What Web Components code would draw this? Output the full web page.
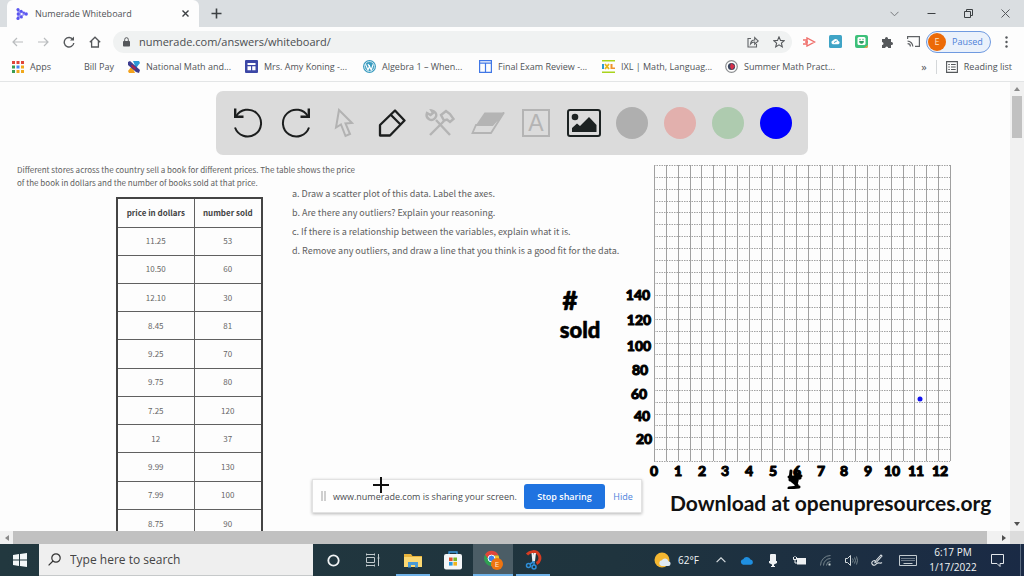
<!DOCTYPE html>
<html lang="en">
<head>
<meta charset="utf-8">
<title>Numerade Whiteboard</title>
<style>
  html, body { margin: 0; height: 100%; }
  body { font-family: "Open Sans", "Noto Sans", sans-serif; font-size: 10px; color: #505357; background: #fdfdfd; overflow: hidden; }
</style>
</head>
<body>
<desktop-screen></desktop-screen>
<script>
const RESET = `
  *, *::before, *::after { box-sizing: border-box; }
  button, input { font: inherit; color: inherit; border: 0; padding: 0; margin: 0; background: none; outline: none; }
  a { color: inherit; text-decoration: none; }
  svg { display: block; flex: none; }
`;
function define(name, css, html, after) {
  const tpl = document.createElement('template');
  tpl.innerHTML = `<style>${RESET}${css}</style>${html}`;
  customElements.define(name, class extends HTMLElement {
    constructor() {
      super();
      this.attachShadow({ mode: 'open' }).append(tpl.content.cloneNode(true));
    }
    connectedCallback() { if (after) after(this, this.shadowRoot); }
  });
}
const label = (host, root) => root.querySelector('button').setAttribute('aria-label', host.getAttribute('label') || '');

/* ---------- shared controls ---------- */
define('icon-button', `
  :host { display: flex; flex: none; width: 26px; }
  button { flex: 1; height: 22px; display: grid; place-items: center; }
`, `<button type="button"><slot></slot></button>`, label);

define('scroll-rail', `
  :host { display: flex; background: #f1f1f1; align-items: stretch; }
  :host([vertical]) { flex-direction: column; }
  .end { flex: none; display: grid; place-items: center; width: 13px; }
  :host([vertical]) .end { width: auto; height: 14px; }
  .track { flex: 1; display: flex; }
  :host([vertical]) .track { flex-direction: column; }
  .thumb { background: #c1c1c1; flex: 0 0 var(--thumb, 50%); }
  :host([vertical]) .thumb { margin: 0 2px; }
  svg { fill: #8a8a8a; }
  :host([vertical]) svg { transform: rotate(90deg); }
  .last svg { fill: #505050; }
`, `
  <div class="end"><svg width="4" height="6"><path d="M4 0v6L0 3z"/></svg></div>
  <div class="track"><div class="thumb"></div></div>
  <div class="end last"><svg width="4" height="6"><path d="M0 0v6l4-3z"/></svg></div>
`);

/* ---------- browser chrome ---------- */
define('tab-strip', `
  :host { display: flex; align-items: stretch; height: 27px; padding-left: 7px; background: #dadee1; }
  .tab { display: flex; align-items: center; width: 192px; padding: 0 7px 0 9px; gap: 7px; background: #fdfdfd; border-radius: 6px 6px 0 0; font-size: 9px; }
  .tab button { flex: 1; text-align: left; line-height: 16px; display: flex; align-items: center; gap: 7px; }
  .tab icon-button { width: 13px; }
  .new { align-self: center; width: 34px; }
  .win { display: flex; margin-left: auto; align-items: center; }
  .win icon-button { width: 37px; }
`, `
  <div class="tab">
    <button type="button" role="tab" aria-selected="true">
      <svg width="12" height="12" viewBox="0 0 12 12" fill="#5a55f0"><path d="M1.400 1 10.600 6 1.400 11z" opacity=".6"/><circle cx="2" cy="1.600" r="1.600"/><circle cx="5.200" cy="3.200" r="1.500"/><circle cx="2.200" cy="6" r="1.600"/><circle cx="10.200" cy="6" r="1.700"/><circle cx="5.400" cy="9" r="1.500"/><circle cx="2" cy="10.400" r="1.600"/><circle cx="7.800" cy="4.600" r="1.200"/><circle cx="5.600" cy="6" r="1" fill="#fff"/></svg>
      <span>Numerade Whiteboard</span>
    </button>
    <icon-button label="Close tab"><svg width="7" height="7" viewBox="0 0 7 7" stroke="#3c4043" stroke-width="1.4"><path d="M.5.5l6 6M6.5.5l-6 6"/></svg></icon-button>
  </div>
  <icon-button class="new" label="New tab"><svg width="11" height="11" viewBox="0 0 11 11" stroke="#3c4043" stroke-width="1.6"><path d="M5.5.5v10M.5 5.5h10"/></svg></icon-button>
  <div class="win">
    <icon-button label="Search tabs"><svg width="9" height="6" viewBox="0 0 9 6" fill="none" stroke="#777a7d"><path d="M.5.8l4 4 4-4"/></svg></icon-button>
    <icon-button label="Minimize"><svg width="9" height="9" viewBox="0 0 9 9" stroke="#3c4043"><path d="M.5 4.5h8"/></svg></icon-button>
    <icon-button label="Restore"><svg width="9" height="9" viewBox="0 0 9 9" fill="none" stroke="#3c4043"><path d="M.5 2.5h6v6h-6zM2.500 2.500v-2h6v6h-2"/></svg></icon-button>
    <icon-button label="Close"><svg width="9" height="9" viewBox="0 0 9 9" stroke="#55585b"><path d="M.5.5l8 8M8.500.5l-8 8"/></svg></icon-button>
  </div>
`);

define('nav-bar', `
  :host { display: flex; align-items: center; height: 29px; padding: 0 5px 0 4px; }
  .omni { flex: 1; display: flex; align-items: center; height: 22px; margin: 0 4px 0 5px; padding: 0 0 0 10px; border-radius: 11px; background: #f0f2f2; }
  input { flex: 1; min-width: 0; margin-left: 9px; font-size: 11px; line-height: 16px; color: #4a4d50; }
  .paused { display: flex; align-items: center; gap: 6px; width: 65px; height: 22px; margin-right: 2px; padding-left: 1px; border: 1px solid #6f9ae0; border-radius: 11px; background: #eaf1fb; color: #4a7fd8; font-size: 9px; }
  .face { display: grid; place-items: center; width: 18px; height: 18px; border-radius: 50%; background: #ec6a08; color: #ffe3c4; }
`, `
  <icon-button label="Back"><svg width="11" height="10" viewBox="0 0 11 10" fill="none" stroke="#b9bcbe" stroke-width="1.200"><path d="M11 5H1M5 1 1 5l4 4"/></svg></icon-button>
  <icon-button label="Forward"><svg width="11" height="10" viewBox="0 0 11 10" fill="none" stroke="#b9bcbe" stroke-width="1.200"><path d="M0 5h10M6 1l4 4-4 4"/></svg></icon-button>
  <icon-button label="Reload"><svg width="12" height="12" viewBox="0 0 12 12" fill="none" stroke="#55585b" stroke-width="1.400"><path d="M10 3.500A4.800 4.800 0 1 0 10.800 7"/><path d="M11 .6v4H7z" fill="#55585b" stroke="none"/></svg></icon-button>
  <icon-button label="Home"><svg width="12" height="12" viewBox="0 0 12 12" fill="none" stroke="#55585b" stroke-width="1.300"><path d="M.8 6.300 6 1.200l5.200 5.100M2.600 5v6h6.800V5"/></svg></icon-button>
  <div class="omni">
    <svg width="7" height="10" viewBox="0 0 7 10"><rect y="4" width="7" height="5.500" rx=".8" fill="#55585b"/><path d="M1.700 4V2.500a1.800 1.800 0 0 1 3.600 0V4" fill="none" stroke="#55585b"/></svg>
    <input type="text" aria-label="Address" value="numerade.com/answers/whiteboard/">
    <icon-button label="Share"><svg width="12" height="12" viewBox="0 0 12 12" fill="none" stroke="#606366" stroke-width="1.100"><path d="M4 2.500H1v8.500h8.500V8M3.500 8c.3-2.700 1.700-4 4.200-4V1.600L11.300 5 7.700 8.200V6C6 6 4.600 6.500 3.500 8z"/></svg></icon-button>
    <icon-button label="Bookmark this tab"><svg width="12" height="12" viewBox="0 0 12 12" fill="none" stroke="#55585b" stroke-width="1.100"><path d="M6 .9l1.500 3.500 3.800.3-2.900 2.500.9 3.700L6 8.900l-3.300 2 .9-3.700L.7 4.700l3.800-.3z"/></svg></icon-button>
  </div>
  <icon-button label="Screencast extension"><svg width="14" height="10" viewBox="0 0 14 10" fill="none" stroke="#f0706c" stroke-width="1.400"><path d="M5 3V1l7.500 4L5 9V7M1 3h4v4H1M3 5h3"/></svg></icon-button>
  <icon-button label="Cloud extension"><svg width="13" height="13" viewBox="0 0 13 13"><rect width="13" height="13" rx="1.500" fill="#3fa4c6"/><path d="M3.800 9.200a1.900 1.900 0 0 1 .2-3.700 2.800 2.800 0 0 1 5.200.4 1.700 1.700 0 0 1 .2 3.300z" fill="#fff"/><path d="M5 7.500 7.800 6" stroke="#3fa4c6"/></svg></icon-button>
  <icon-button label="Bitmoji extension"><svg width="13" height="13" viewBox="0 0 13 13"><rect width="13" height="13" rx="2" fill="#3dc07a"/><rect x="2.500" y="2" width="8" height="8" rx="1.500" fill="#fff"/><path d="M5 3.800v1.400M8 3.800v1.400M4.500 6.500h4c0 2.400-4 2.400-4 0z" stroke="#2c9c60" fill="#2c9c60"/><path d="M9 13h2a2 2 0 0 0 2-2v-1z" fill="#e94"/></svg></icon-button>
  <icon-button label="Extensions"><svg width="12" height="12" viewBox="0 0 12 12" fill="#55585b"><path d="M4 2.500a1.500 1.500 0 0 1 3 0V3h3v3h.5a1.500 1.500 0 0 1 0 3H10v3H7.200a1.500 1.500 0 0 0-3 0H1V9a1.500 1.500 0 0 0 0-3V3h3z"/></svg></icon-button>
  <icon-button label="Cast"><svg width="13" height="11" viewBox="0 0 13 11" fill="none" stroke="#606366" stroke-width="1.200"><path d="M.6 3V.6h11.800v9.800H8M.6 5.200a5.200 5.200 0 0 1 5.200 5.200M.6 7.600a2.800 2.800 0 0 1 2.800 2.800"/></svg></icon-button>
  <button class="paused" type="button"><span class="face">E</span><span>Paused</span></button>
  <icon-button label="Menu"><svg width="3" height="12" viewBox="0 0 3 12" fill="#55585b"><circle cx="1.500" cy="1.500" r="1.200"/><circle cx="1.500" cy="6" r="1.200"/><circle cx="1.500" cy="10.500" r="1.200"/></svg></icon-button>
`);

define('bookmark-link', `
  :host { display: block; min-width: 0; }
  a { display: flex; align-items: center; gap: 6px; white-space: nowrap; line-height: 14px; }
  .icon { flex: none; width: 13px; height: 13px; display: grid; place-items: center; }
`, `<a href="#"><span class="icon"><slot name="icon"></slot></span><slot></slot></a>`);

define('bookmark-bar', `
  :host { display: flex; align-items: center; height: 26px; padding: 0 12px 0 11px; border-bottom: 1px solid #e3e5e6; font-size: 9px; }
  nav { flex: 1; display: grid; grid-template-columns: 54px 62px 118px 118px 116px 123px 123px 1fr; padding-bottom: 4px; }
  .tail { display: flex; align-items: center; padding-bottom: 4px; }
  .more { margin-right: 9px; font-size: 11px; line-height: 14px; }
  .reading { display: flex; align-items: center; gap: 6px; padding-left: 9px; border-left: 1px solid #d4d7d9; line-height: 14px; }
`, `
  <nav aria-label="Bookmarks">
    <bookmark-link><svg slot="icon" width="12" height="12" viewBox="0 0 12 12"><g fill="#e0453a"><path d="M0 0h3v3H0zM4.500 0h3v3h-3zM9 0h3v3H9z"/></g><path d="M0 4.500h3v3H0z" fill="#3a9c52"/><path d="M4.500 4.500h3v3h-3z" fill="#4285f4"/><path d="M9 4.500h3v3H9z" fill="#f0a81c"/><path d="M0 9h3v3H0z" fill="#3a9c52"/><path d="M4.500 9h3v3h-3zM9 9h3v3H9z" fill="#f0a81c"/></svg>Apps</bookmark-link>
    <bookmark-link>Bill Pay</bookmark-link>
    <bookmark-link><svg slot="icon" width="12" height="12" viewBox="0 0 12 12"><path d="M5 0h6l1 2-4 5z" fill="#2b9ad6"/><path d="M7 12H1l-1-2 4-5z" fill="#f3a21c"/><path d="M0 1l2-1 10 9-1 3-3-1L0 4z" fill="#3d3c8f"/><path d="M4 3.500l4 3.500-1 2-4-4z" fill="#a8254e"/></svg>National Math and...</bookmark-link>
    <bookmark-link><svg slot="icon" width="13" height="13" viewBox="0 0 13 13"><rect width="13" height="13" rx="1" fill="#3c47a6"/><path d="M2.500 3h8v2h-8zM2.500 6.200h3.500v4H2.500zM7.200 6.200h3.300v4H7.200z" fill="#fff"/></svg>Mrs. Amy Koning -...</bookmark-link>
    <bookmark-link><svg slot="icon" width="13" height="13" viewBox="0 0 13 13"><circle cx="6.500" cy="6.500" r="6.500" fill="#3a9cc0"/><circle cx="6.500" cy="6.500" r="5" fill="none" stroke="#fff" stroke-width=".7"/><path d="M2.500 4.200 5 10l1.500-4L8.200 10l2-5.800M5 4l2.500 5" fill="none" stroke="#fff" stroke-width="1.100"/></svg>Algebra 1 – When...</bookmark-link>
    <bookmark-link><svg slot="icon" width="13" height="13" viewBox="0 0 13 13" fill="none" stroke="#4077e6" stroke-width="1.200"><path d="M.6.6h11.800v11.800H.6zM.6 3.200h11.800M6.500 3.200v9"/></svg>Final Exam Review -...</bookmark-link>
    <bookmark-link><svg slot="icon" width="13" height="13" viewBox="0 0 13 13"><path d="M0 0h13v1.400H0zM0 11.600h13V13H0z" fill="#a9d31d"/><path d="M0 4h2v5H0z" fill="#2c9ad6"/><path d="M3 4l4 5M7 4 3 9" stroke="#e8b61b" stroke-width="1.800"/><path d="M8.500 4h2v3.500H13V9H8.500z" fill="#f0932b"/></svg>IXL | Math, Languag...</bookmark-link>
    <bookmark-link><svg slot="icon" width="13" height="13" viewBox="0 0 13 13"><circle cx="6.500" cy="6.500" r="5.800" fill="#fff" stroke="#8b8e90" stroke-width="1.200"/><circle cx="6.500" cy="6.500" r="3.600" fill="#39445e"/><path d="M6 3l4 3-3 4-2-3z" fill="#d8304a"/></svg>Summer Math Pract...</bookmark-link>
  </nav>
  <div class="tail">
    <button class="more" type="button" aria-label="More bookmarks">»</button>
    <button class="reading" type="button"><svg width="12" height="12" viewBox="0 0 12 12" fill="none" stroke="#55585b" stroke-width="1.100"><path d="M.6.6h10.800v10.800H.6zM2.300 3.500h1.500M2.300 6h1.500M2.300 8.500h1.500M5 3.500h4.700M5 6h4.700M5 8.500h4.700"/></svg>Reading list</button>
  </div>
`);

/* ---------- whiteboard ---------- */
define('tool-button', `
  :host { display: block; width: 48px; }
  button { width: 100%; height: 48px; display: grid; place-items: center; }
  :host([color]) button::before { content: ""; width: 32px; height: 32px; border-radius: 50%; background: var(--swatch); }
`, `<button type="button"><slot></slot></button>`, (host, root) => {
  label(host, root);
  if (host.hasAttribute('color')) host.style.setProperty('--swatch', host.getAttribute('color'));
});

define('board-tools', `
  :host { display: flex; align-items: center; padding: 8px; border-radius: 7px; background: #dbdbdb; }
`, `
  <tool-button label="Undo"><svg width="30" height="30" viewBox="0 0 30 30" fill="none" stroke="#1c1e1e" stroke-width="2"><path d="M3 8.500A13.400 13.400 0 1 1 2 19.500"/><path d="M2.200 .5v8.300h8.300" stroke-width="2.400"/></svg></tool-button>
  <tool-button label="Redo"><svg width="30" height="30" viewBox="0 0 30 30" fill="none" stroke="#1c1e1e" stroke-width="2"><path d="M27 8.500A13.400 13.400 0 1 0 28 19.500"/><path d="M27.800 .5v8.300h-8.300" stroke-width="2.400"/></svg></tool-button>
  <tool-button label="Select"><svg width="20" height="30" viewBox="0 0 20 30" fill="none" stroke="#b2b2b2" stroke-width="2"><path d="M5 2 2 19.500l5-3L11.500 28l4.500-2-4.500-10.500 6.500-.5z"/></svg></tool-button>
  <tool-button label="Pen"><svg width="28" height="28" viewBox="0 0 28 28" fill="none" stroke="#1c1e1e" stroke-width="2.300" stroke-linejoin="round"><path d="M17 1.500 26.500 11.500 12 26.500H2V16zM13 6l9.500 9.500"/></svg></tool-button>
  <tool-button label="Tools"><svg width="30" height="28" viewBox="0 0 30 28" fill="none" stroke="#b4b4b4" stroke-width="2.400"><path d="M11 11l14 15M19 12 5 26M2 4l3.500 2L8 4 6.500 1.500c3.500.500 5.500 3.500 4.500 6S7 12 4.500 10.500 1 6.500 2 4z"/><path d="M16 6 21 2l4 3 3.500 5-3.500 3-3-2.500-3 1z"/></svg></tool-button>
  <tool-button label="Eraser"><svg width="34" height="24" viewBox="0 0 34 24"><path d="M13.500 1.500H33L21.500 14H5z" fill="#b4b4b4"/><path d="M33 1.500 20 22H1.500L5 14h16.500L33 1.500" fill="none" stroke="#b4b4b4" stroke-width="1.800"/></svg></tool-button>
  <tool-button label="Text"><svg width="28" height="28" viewBox="0 0 28 28" fill="none" stroke="#b4b4b4" stroke-width="2"><path d="M1 1h26v26H1z"/><text x="14" y="22" font-family="Liberation Sans, sans-serif" font-size="23" text-anchor="middle" fill="#b4b4b4" stroke="none">A</text></svg></tool-button>
  <tool-button label="Image"><svg width="34" height="28" viewBox="0 0 34 28"><rect x="1" y="1" width="32" height="26" rx="2" fill="none" stroke="#1c2222" stroke-width="2"/><circle cx="8" cy="8" r="3.300" fill="#1c2222"/><path d="M5 23v-4l5-4.500 3 2.500 9-9 7.500 8v7z" fill="#1c2222"/></svg></tool-button>
  <tool-button label="Gray" color="#afafaf"></tool-button>
  <tool-button label="Red" color="#e2b0ad"></tool-button>
  <tool-button label="Green" color="#aecbaf"></tool-button>
  <tool-button label="Blue" color="#0000ff"></tool-button>
`);

define('price-table', `
  :host { display: block; font-size: 8px; line-height: 10px; color: #666; }
  table { width: 147px; height: 343px; border: 2px solid #444; border-collapse: collapse; text-align: center; }
  th, td { padding: 0; border: 1px solid #606060; vertical-align: middle; }
  th:first-child, td:first-child { width: 77px; }
  th { height: 29px; color: #444; font-weight: 700; }
`, `
  <table>
    <thead><tr><th scope="col">price in dollars</th><th scope="col">number sold</th></tr></thead>
    <tbody></tbody>
  </table>
`, (host, root) => {
  const rows = [['11.25', 53], ['10.50', 60], ['12.10', 30], ['8.45', 81], ['9.25', 70], ['9.75', 80], ['7.25', 120], ['12', 37], ['9.99', 130], ['7.99', 100], ['8.75', 90]];
  root.querySelector('tbody').innerHTML = rows.map(([p, n]) => `<tr><td>${p}</td><td>${n}</td></tr>`).join('');
});

define('problem-sheet', `
  :host { display: grid; grid-template-columns: 275px 1fr; align-content: start; font-family: "Noto Sans CJK SC", "Noto Sans", sans-serif; font-size: 8px; color: #606060; }
  p { grid-column: 1 / -1; margin: 0; max-width: 352px; line-height: 13px; }
  price-table { margin: 8px 0 0 99px; }
  ol { margin: 0; padding: 0; list-style: none; display: grid; align-content: start; gap: 9px; font-size: 9px; line-height: 10px; white-space: nowrap; }
`, `
  <p>Different stores across the country sell a book for different prices. The table shows the price<br>of the book in dollars and the number of books sold at that price.</p>
  <price-table></price-table>
  <ol>
    <li>a. Draw a scatter plot of this data. Label the axes.</li>
    <li>b. Are there any outliers? Explain your reasoning.</li>
    <li>c. If there is a relationship between the variables, explain what it is.</li>
    <li>d. Remove any outliers, and draw a line that you think is a good fit for the data.</li>
  </ol>
`);

define('scatter-grid', `
  :host { display: block; width: 450px; }
  figure { margin: 0; }
  figcaption { margin-left: 115px; font: 700 21px/28px Lato, "Open Sans", sans-serif; color: #111; white-space: nowrap; }
  .v { stroke: #a0a0a0; }
  .h { stroke: #a2a2a2; stroke-dasharray: 1.500 1; }
  .ink { font-family: Lato, "Open Sans", sans-serif; font-weight: 900; fill: #000; stroke: #000; stroke-linejoin: round; text-anchor: middle; }
  .scribble { fill: none; stroke: #000; stroke-width: 3; stroke-linecap: round; stroke-linejoin: round; }
`, `
  <figure>
    <svg width="450" height="326" viewBox="0 0 450 326">
      <g class="lines"></g>
      <g class="ink ticks" font-size="14" stroke-width="1"></g>
      <g class="ink" stroke-width=".6"><text x="15" y="147" font-size="26">#</text><text x="25" y="175" font-size="22">sold</text></g>
      <path class="scribble" d="M234 314l12-1M236 308l-1 9 10-2M241 307v14M236 317l6 5M244 310l-3 12M234 325l10-1"/>
      <circle cx="365" cy="236" r="2.500" fill="#1212f0"/>
    </svg>
    <figcaption>Download at openupresources.org</figcaption>
  </figure>
`, (host, root) => {
  const x0 = 99, y0 = 2, size = 296, n = 25;
  let lines = '';
  for (let i = 0; i <= n; i++) {
    const d = Math.round(size * i / n) + .5;
    lines += `<path class="v" d="M${x0 + d} ${y0}v${size}"/><path class="h" d="M${x0} ${y0 + d}h${size}"/>`;
  }
  root.querySelector('.lines').innerHTML = lines;
  const ys = [[140, 137, 83], [120, 162, 84], [100, 188, 84], [80, 212, 85], [60, 236, 84], [40, 258, 87], [20, 281, 89]];
  let ticks = ys.map(([t, y, x]) => `<text x="${x}" y="${y}">${t}</text>`).join('');
  for (let i = 0; i <= 12; i++) ticks += `<text x="${Math.round(x0 + i * 23.8)}" y="313">${i}</text>`;
  root.querySelector('.ticks').innerHTML = ticks;
});

define('share-notice', `
  :host { display: flex; align-items: center; width: 330px; height: 34px; padding-left: 8px; background: #fefefe; border: 1px solid #e2e2e2; box-shadow: 0 1px 3px rgba(0,0,0,.28); color: #4a4d50; font-size: 9px; }
  .grip { flex: none; width: 5px; height: 10px; margin-right: 7px; border: solid #cfcfcf; border-width: 0 2px; }
  span { flex: 1; white-space: nowrap; }
  .stop { width: 81px; height: 25px; border-radius: 3px; background: #1f73e0; color: #fff; font-weight: 600; }
  .hide { width: 36px; height: 24px; color: #4c82dc; }
`, `<i class="grip"></i><span>www.numerade.com is sharing your screen.</span><button class="stop" type="button">Stop sharing</button><button class="hide" type="button">Hide</button>`);

define('white-board', `
  :host { display: grid; grid-template: minmax(0, 1fr) 13px / minmax(0, 1fr) 14px; min-height: 0; }
  main { position: relative; overflow: hidden; display: flex; flex-direction: column; gap: 8px; padding-top: 9px; }
  .top { display: flex; justify-content: center; padding-left: 14px; }
  .sheet { display: flex; padding-left: 17px; }
  problem-sheet { flex: none; width: 538px; }
  share-notice { position: absolute; left: 312px; bottom: 18px; }
  .cross { position: absolute; left: 373px; bottom: 38px; }
  .corner { background: #dcdcdc; }
`, `
  <main>
    <div class="top"><board-tools></board-tools></div>
    <div class="sheet"><problem-sheet></problem-sheet><scatter-grid></scatter-grid></div>
    <share-notice></share-notice>
    <svg class="cross" width="16" height="16" viewBox="0 0 16 16" stroke="#111" stroke-width="2"><path d="M8 0v16M0 8h16"/></svg>
  </main>
  <scroll-rail vertical style="--thumb: 42px"></scroll-rail>
  <scroll-rail style="--thumb: 99%"></scroll-rail>
  <div class="corner"></div>
`);

/* ---------- taskbar ---------- */
define('task-app', `
  :host { display: block; width: 40px; }
  button { width: 100%; height: 32px; display: grid; place-items: center; }
  :host([open]) button { background: linear-gradient(#6fb2e8, #6fb2e8) bottom / 34px 2px no-repeat; }
  :host([active]) button { background-color: #4b5d66; background-size: 100% 2px; }
`, `<button type="button"><slot></slot></button>`, label);

define('task-bar', `
  :host { display: flex; align-items: stretch; height: 32px; background: linear-gradient(90deg, #22383f, #1f343e 60%, #1a2a45); color: #f2f5f6; }
  .start { width: 39px; }
  label { display: flex; align-items: center; gap: 9px; width: 274px; padding-left: 9px; background: #efefef; border-bottom: 1px solid #c6c9ca; }
  input { flex: 1; min-width: 0; font-size: 12px; line-height: 18px; color: #444; }
  input::placeholder { color: #444; opacity: 1; }
  .tray { display: flex; align-items: center; margin-left: auto; }
  .weather { display: flex; align-items: center; gap: 7px; margin-right: 9px; }
  .clock { width: 54px; margin-right: 4px; font-size: 10px; line-height: 15px; text-align: center; }
  .edge { width: 1px; height: 32px; margin: 0 3px 0 10px; background: #5b6b80; }
`, `
  <task-app class="start" label="Start"><svg width="14" height="14" viewBox="0 0 14 14" fill="#f4f7f8"><path d="M0 2l6-.9v5.400H0zM7 1l7-1v6.500H7zM0 7.500h6v5.400L0 12zM7 7.500h7V14l-7-1z"/></svg></task-app>
  <label><svg width="13" height="13" viewBox="0 0 13 13" fill="none" stroke="#333" stroke-width="1.200"><circle cx="8" cy="5" r="4.200"/><path d="M5 8 .6 12.400"/></svg><input type="text" placeholder="Type here to search" aria-label="Search"></label>
  <task-app label="Cortana"><svg width="13" height="13" viewBox="0 0 13 13" fill="none" stroke="#f0f3f4" stroke-width="1.800"><circle cx="6.500" cy="6.500" r="5.200"/></svg></task-app>
  <task-app label="Task view"><svg width="14" height="14" viewBox="0 0 14 14" fill="none" stroke="#c3cbce"><path d="M.5 4.500h8v5h-8zM.5 2.500v-2M8.500 2.500v-2M.5 1.500h8M.5 13.500v-2M8.500 13.500v-2M.5 12.500h8M12.500 1v12M11.500 5h2"/></svg></task-app>
  <task-app label="File Explorer" open><svg width="18" height="15" viewBox="0 0 18 15"><path d="M0 1h7l1.500 2H18v11H0z" fill="#e8b33c"/><path d="M0 4h18v10H0z" fill="#fbd872"/><path d="M4 9h10v5.500h-3V12H7v2.500H4z" fill="#4a9ad4"/></svg></task-app>
  <task-app label="Microsoft Store"><svg width="20" height="20" viewBox="0 0 20 20"><path d="M6 5V2h8v3" fill="none" stroke="#3d9be0" stroke-width="1.300"/><rect x="1" y="4" width="18" height="15.500" rx="2" fill="#f4f6f8"/><path d="M6 7.500h3.600v3.600H6z" fill="#e2502c"/><path d="M10.400 7.500H14v3.600h-3.600z" fill="#76b62a"/><path d="M6 12h3.600v3.600H6z" fill="#2a9be0"/><path d="M10.400 12H14v3.600h-3.600z" fill="#f0b41c"/></svg></task-app>
  <task-app label="Google Chrome" open active><svg width="20" height="20" viewBox="0 0 20 20"><circle cx="8.500" cy="8.500" r="7.500" fill="#2fa052"/><path d="M2 4.700A7.500 7.500 0 0 1 15.500 5.500H8.500L6 9.500z" fill="#e2453a"/><path d="M15.500 5.500A7.500 7.500 0 0 1 8 16l4-6.500-1-4z" fill="#f5c02c"/><circle cx="8.500" cy="8.500" r="3.400" fill="#3f80ea" stroke="#fff"/><circle cx="14" cy="14" r="6" fill="#ee7410"/><text x="14" y="17" font-size="8" text-anchor="middle" fill="#ffe9d0">E</text></svg></task-app>
  <task-app label="Snip" open><svg width="18" height="20" viewBox="0 0 18 20" fill="none"><path d="M3 4.500C6 1 12 .5 14.500 4S16 12 12.500 13.500" stroke="#d63c22" stroke-width="3"/><path d="M8.500 3l1 10M11 3l-1 8" stroke="#eef2f4" stroke-width="2"/><circle cx="4.500" cy="15.500" r="2" stroke="#2f8fd8" stroke-width="1.500"/><circle cx="10" cy="17" r="2" stroke="#2f8fd8" stroke-width="1.500"/><path d="M6 14l4-2.500M10 15v-3" stroke="#2f8fd8" stroke-width="1.500"/></svg></task-app>
  <div class="tray">
    <div class="weather"><svg width="17" height="16" viewBox="0 0 17 16"><circle cx="8" cy="8" r="7.500" fill="#f5b731"/><path d="M7.500 14a2.900 2.900 0 0 1 .3-5.700 3.600 3.600 0 0 1 6.600.9A2.400 2.400 0 0 1 14 14z" fill="#dfe9f2"/></svg><span>62°F</span></div>
    <icon-button label="Show hidden icons"><svg width="10" height="6" viewBox="0 0 10 6" fill="none" stroke="#d6dcdf" stroke-width="1.200"><path d="M.6 5.200 5 .8l4.400 4.400"/></svg></icon-button>
    <icon-button label="OneDrive"><svg width="14" height="9" viewBox="0 0 14 9" fill="#1f8fe0"><path d="M3 8.700a2.800 2.800 0 0 1 .2-5.500A4 4 0 0 1 10.500 3.600a2.600 2.600 0 0 1 .5 5.100z"/></svg></icon-button>
    <icon-button label="Microphone"><svg width="8" height="13" viewBox="0 0 8 13" fill="#eef1f3"><rect x="1" width="6" height="9" rx="1"/><path d="M0 7h8v2L5 10.500V12h1v1H2v-1h1v-1.500L0 9z"/></svg></icon-button>
    <icon-button label="Battery"><svg width="13" height="9" viewBox="0 0 13 9"><path d="M4 2h9v6.500H4z" fill="#eef1f3"/><path d="M.5 1v2.500h3V1M2 3.500V7h3M2 1V0" fill="none" stroke="#eef1f3"/></svg></icon-button>
    <icon-button label="Network"><svg width="11" height="11" viewBox="0 0 11 11" fill="none" stroke="#76858c"><path d="M.5 10.500a10 10 0 0 1 10-10M3.500 10.500a7 7 0 0 1 7-7M6.500 10.500a4 4 0 0 1 4-4"/><circle cx="9.500" cy="9.500" r="1" fill="#cdd4d8"/></svg></icon-button>
    <icon-button label="Volume"><svg width="13" height="11" viewBox="0 0 13 11" fill="none" stroke="#d6dcdf"><path d="M.5 3.500h2l3-3v10l-3-3h-2z"/><path d="M7.500 3.500q1.500 2 0 4M9.500 2.500q2 3 0 6M11.500 1.500q2 4 0 8" stroke="#76858c"/></svg></icon-button>
    <icon-button label="Pen menu"><svg width="12" height="12" viewBox="0 0 12 12" fill="none" stroke="#dde2e5" stroke-width="1.100"><path d="M4.500 7 10 1l1 1-5.500 6-1.500.5zM4 6.500C1 6.500 0 9 1.500 10.500s4 .5 4-1.500M6 9.500c2-2 3 1 5-1"/></svg></icon-button>
    <icon-button label="Touch keyboard" style="width: 36px"><svg width="18" height="11" viewBox="0 0 18 11" fill="none" stroke="#c3cbd0"><path d="M.5.5h17v10H.5z"/><path d="M2.500 3.500h13M2.500 5.500h13" stroke-dasharray="1 1"/><path d="M4.500 8.500h9"/></svg></icon-button>
    <div class="clock"><div>6:17 PM</div><div>1/17/2022</div></div>
    <icon-button label="Notifications"><svg width="13" height="13" viewBox="0 0 13 13" fill="none" stroke="#e2e6ea"><path d="M.5.500h12v9H9v3l-3-3H.5z"/></svg></icon-button>
    <i class="edge"></i>
  </div>
`);

define('desktop-screen', `
  :host { display: grid; grid-template-rows: auto auto auto minmax(0, 1fr) auto; height: 100vh; }
`, `<tab-strip></tab-strip><nav-bar></nav-bar><bookmark-bar></bookmark-bar><white-board></white-board><task-bar></task-bar>`);
</script>
</body>
</html>
